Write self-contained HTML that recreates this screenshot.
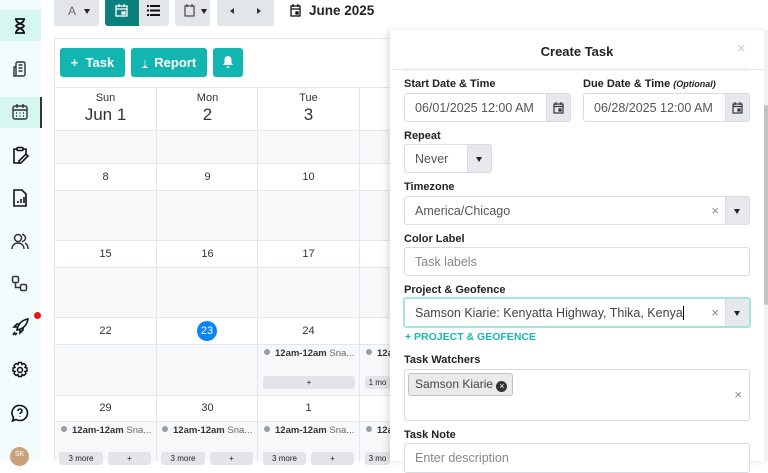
<!DOCTYPE html>
<html><head><meta charset="utf-8"><style>
*{box-sizing:border-box;margin:0;padding:0}
body{width:768px;height:461px;overflow:hidden;background:#fff;font-family:"Liberation Sans",sans-serif;position:relative;color:#222}
.abs{position:absolute}
.sb{left:0;top:0;width:41px;height:461px;background:#f3fcfc}
.ic{position:absolute;left:11px;width:18px;height:18px}
.act{position:absolute;left:0;width:41px;background:#d6f6f0}
.tb{position:absolute;top:0;height:26px;background:#e3e6e9;border-radius:0 0 3px 3px}
.btn{position:absolute;top:48px;height:29px;background:#13b5b1;border-radius:3px;color:#fff;font-weight:bold;font-size:13px;line-height:29px;text-align:center}
.cal{left:54px;top:38px;width:340px;height:423px;border-top:1px solid #e5e7ea;border-left:1px solid #e5e7ea}
.vl{position:absolute;top:88px;width:1px;height:373px;background:#e4e6e9}
.hl{position:absolute;left:54px;width:340px;height:1px;background:#e4e6e9}
.gray{position:absolute;left:55px;width:335px;background:#f7f8fa}
.dn{position:absolute;font-size:11px;color:#333;text-align:center;width:101px}
.ev{position:absolute;font-size:9.5px;color:#333;white-space:nowrap}
.ev b{font-weight:bold}
.ev i{display:inline-block;width:6px;height:6px;border-radius:50%;background:#9a9ea4;margin-right:5px;vertical-align:1px}
.pl{position:absolute;height:13px;background:#e2e4e7;border-radius:3px;font-size:8px;text-align:center;line-height:13px;color:#222;overflow:hidden}
.panel{left:390px;top:30px;width:378px;height:431px;background:#fff;box-shadow:-3px 0 6px rgba(0,0,0,.12)}
.lb{position:absolute;left:404px;font-size:11px;font-weight:bold;color:#222}
.inp{position:absolute;border:1px solid #d8dbdf;border-radius:3px;background:#fff;font-size:12.5px;color:#555;padding-left:10px;display:flex;align-items:center}
.addon{position:absolute;top:0;right:0;bottom:0;background:#e6e8eb;width:24px;border-left:1px solid #d8dbdf}
.tri{position:absolute;width:0;height:0;border-left:3.5px solid transparent;border-right:3.5px solid transparent;border-top:5px solid #222}
.x{position:absolute;color:#888;font-size:13px}
</style></head><body>
<div class="abs sb"></div>
<div class="act" style="top:10px;height:31px"></div>
<div class="act" style="top:97px;height:31px"></div>
<div class="abs" style="left:40px;top:97px;width:2px;height:31px;background:#333"></div>
<svg class="ic" style="top:17px" viewBox="0 0 18 18" fill="none" stroke="#111" stroke-width="1.8"><path d="M4 2h10M4 16h10M5 2c0 5 8 5 8 7s-8 2-8 7M13 2c0 5-8 5-8 7s8 2 8 7"/></svg>
<svg class="ic" style="top:60px" viewBox="0 0 18 18" fill="none" stroke="#333" stroke-width="1.4"><rect x="5" y="2" width="9" height="14" rx="1.5"/><path d="M5 7H3v9h2M7.5 5h4M7.5 8h4M7.5 11h4"/></svg>
<svg class="ic" style="top:103px" viewBox="0 0 18 18" fill="none" stroke="#333" stroke-width="1.4"><rect x="2" y="3" width="14" height="13" rx="2"/><path d="M2 7h14M6 1v4M12 1v4M5 10h1M8.5 10h1M12 10h1M5 13h1M8.5 13h1M12 13h1"/></svg>
<svg class="ic" style="top:146px" viewBox="0 0 18 18" fill="none" stroke="#111" stroke-width="1.6"><path d="M6 3H3v14h6M12 3h3v6"/><rect x="6" y="1.5" width="6" height="3" rx="1"/><path d="M8 15l7-7 2 2-7 7H8z"/></svg>
<svg class="ic" style="top:189px" viewBox="0 0 18 18" fill="none" stroke="#111" stroke-width="1.6"><path d="M3 1h8l4 4v12H3z"/><path d="M7 14v-2M10 14v-4M13 14v-6" /></svg>
<svg class="ic" style="top:232px" viewBox="0 0 18 18" fill="none" stroke="#333" stroke-width="1.5"><circle cx="7" cy="6" r="3.5"/><path d="M1 17c0-4 3-6 6-6s6 2 6 6M11 2.5a3.5 3.5 0 010 7M14 11c2 1 3 3 3 6"/></svg>
<svg class="ic" style="top:275px" viewBox="0 0 18 18" fill="none" stroke="#333" stroke-width="1.5"><rect x="1.5" y="1.5" width="6" height="6" rx="1.5"/><rect x="9.5" y="9.5" width="6" height="6" rx="1.5"/><path d="M4.5 7.5v5h5"/></svg>
<svg class="ic" style="top:318px" viewBox="0 0 18 18" fill="none" stroke="#111" stroke-width="1.6"><path d="M6 12C7 6 11 2 17 1c-1 6-5 10-11 11zM6 9L3 9l3-3h3M9 12v3l3-3v-3M4 14l-2 3M6 15l-2 2"/></svg>
<div class="abs" style="left:34px;top:312px;width:7px;height:7px;border-radius:50%;background:#e8121b"></div>
<svg class="ic" style="top:361px" viewBox="0 0 18 18" fill="none" stroke="#111" stroke-width="1.5"><circle cx="9" cy="9" r="2.5"/><path d="M7.5 1.5h3l.5 2 2-1 2 2-1 2 2 .5v3l-2 .5 1 2-2 2-2-1-.5 2h-3l-.5-2-2 1-2-2 1-2-2-.5v-3l2-.5-1-2 2-2 2 1z"/></svg>
<svg class="ic" style="top:404px" viewBox="0 0 18 18" fill="none" stroke="#111" stroke-width="1.6"><path d="M9 1.5a7.5 7.5 0 110 15c-1.5 0-3-.4-4-1L1.5 17l1-3.5A7.5 7.5 0 019 1.5z"/><path d="M7 7a2 2 0 114 0c0 1.5-2 1.5-2 3M9 12.5v.5"/></svg>
<div class="abs" style="left:10px;top:447px;width:19px;height:19px;border-radius:50%;background:#c9a27c;color:#fff;font-size:7px;text-align:center;line-height:16px">SK</div>

<!-- toolbar -->
<div class="tb" style="left:54px;width:45px"></div>
<div class="abs" style="left:68px;top:4px;font-size:12px;color:#666">A</div><div class="tri" style="left:84px;top:9px"></div>
<div class="tb" style="left:105px;width:34px;background:#0b7f7b;border-radius:0 0 0 3px"></div>
<svg class="abs" style="left:115px;top:4px" width="13" height="13" viewBox="0 0 13 13" fill="none" stroke="#fff" stroke-width="1.3"><rect x="1" y="2" width="11" height="10"/><path d="M1 5h11M4 0v3M9 0v3"/><rect x="7" y="8" width="3" height="2" fill="#fff"/></svg>
<div class="tb" style="left:139px;width:30px;border-radius:0 0 3px 0"></div>
<svg class="abs" style="left:147px;top:5px" width="13" height="11" viewBox="0 0 13 11" fill="#111"><rect x="0" y="0" width="2" height="2"/><rect x="3" y="0" width="10" height="2"/><rect x="0" y="4.5" width="2" height="2"/><rect x="3" y="4.5" width="10" height="2"/><rect x="0" y="9" width="2" height="2"/><rect x="3" y="9" width="10" height="2"/></svg>
<div class="tb" style="left:175px;width:35px"></div>
<svg class="abs" style="left:184px;top:4px" width="11" height="13" viewBox="0 0 11 13" fill="none" stroke="#444" stroke-width="1.2"><rect x="1" y="2" width="9" height="10"/><path d="M3 0v3M8 0v3"/></svg><div class="tri" style="left:201px;top:9px"></div>
<div class="tb" style="left:217px;width:57px"></div>
<div class="abs" style="left:230px;top:8px;border-top:3px solid transparent;border-bottom:3px solid transparent;border-right:4px solid #333"></div>
<div class="abs" style="left:257px;top:8px;border-top:3px solid transparent;border-bottom:3px solid transparent;border-left:4px solid #333"></div>
<svg class="abs" style="left:290px;top:4px" width="11" height="13" viewBox="0 0 11 13" fill="none" stroke="#111" stroke-width="1.3"><rect x="1" y="2" width="9" height="10"/><path d="M1 5h9M3 0v3M8 0v3"/><rect x="6" y="8" width="2" height="2" fill="#111"/></svg>
<div class="abs" style="left:309px;top:3px;font-size:13.5px;font-weight:bold">June 2025</div>

<div class="abs cal"></div>
<div class="btn" style="left:60px;width:65px">+&nbsp; Task</div>
<div class="btn" style="left:131px;width:76px"><span style="display:inline-block;border-bottom:1.5px solid #fff;line-height:8px;margin-right:6px">&#x2193;</span>Report</div>
<div class="btn" style="left:213px;width:30px"><svg width="10" height="12" viewBox="0 0 10 12" style="vertical-align:-1px"><path d="M5 0c2.5 0 3.5 2 3.5 4v3l1.5 2H0l1.5-2V4C1.5 2 2.5 0 5 0zM3.5 10.5h3a1.5 1.5 0 01-3 0z" fill="#fff"/></svg></div>

<div class="hl" style="top:87px"></div>
<div class="gray" style="top:131px;height:32px"></div>
<div class="gray" style="top:191px;height:49px"></div>
<div class="gray" style="top:268px;height:49px"></div>
<div class="gray" style="top:345px;height:50px"></div>
<div class="gray" style="top:422px;height:39px"></div>
<div class="hl" style="top:130px"></div><div class="hl" style="top:163px"></div><div class="hl" style="top:190px"></div>
<div class="hl" style="top:240px"></div><div class="hl" style="top:267px"></div><div class="hl" style="top:317px"></div>
<div class="hl" style="top:344px"></div><div class="hl" style="top:395px"></div><div class="hl" style="top:421px"></div>
<div class="vl" style="left:156px"></div><div class="vl" style="left:257px"></div><div class="vl" style="left:359px"></div>

<div class="dn" style="left:55px;top:92px">Sun<div style="font-size:17px;margin-top:1px">Jun 1</div></div>
<div class="dn" style="left:157px;top:92px">Mon<div style="font-size:17px;margin-top:1px">2</div></div>
<div class="dn" style="left:258px;top:92px">Tue<div style="font-size:17px;margin-top:1px">3</div></div>
<div class="dn" style="left:55px;top:171px">8</div><div class="dn" style="left:157px;top:171px">9</div><div class="dn" style="left:258px;top:171px">10</div>
<div class="dn" style="left:55px;top:248px">15</div><div class="dn" style="left:157px;top:248px">16</div><div class="dn" style="left:258px;top:248px">17</div>
<div class="dn" style="left:55px;top:325px">22</div><div class="dn" style="left:258px;top:325px">24</div>
<div class="abs" style="left:197px;top:321px;width:20px;height:20px;border-radius:50%;background:#0b84f5;color:#fff;font-size:11px;text-align:center;line-height:20px">23</div>
<div class="dn" style="left:55px;top:402px">29</div><div class="dn" style="left:157px;top:402px">30</div><div class="dn" style="left:258px;top:402px">1</div>

<div class="ev" style="left:264px;top:348px"><i></i><b>12am-12am</b> <span style="color:#666">Sna...</span></div>
<div class="ev" style="left:366px;top:348px"><i></i><b>12a</b></div>
<div class="pl" style="left:263px;top:376px;width:92px">+</div>
<div class="pl" style="left:365px;top:376px;width:25px;border-radius:3px 0 0 3px">1 mo</div>
<div class="ev" style="left:61px;top:425px"><i></i><b>12am-12am</b> <span style="color:#666">Sna...</span></div>
<div class="ev" style="left:162px;top:425px"><i></i><b>12am-12am</b> <span style="color:#666">Sna...</span></div>
<div class="ev" style="left:264px;top:425px"><i></i><b>12am-12am</b> <span style="color:#666">Sna...</span></div>
<div class="ev" style="left:366px;top:425px"><i></i><b>12a</b></div>
<div class="pl" style="left:59px;top:452px;width:44px">3 more</div><div class="pl" style="left:108px;top:452px;width:43px">+</div>
<div class="pl" style="left:161px;top:452px;width:44px">3 more</div><div class="pl" style="left:210px;top:452px;width:43px">+</div>
<div class="pl" style="left:263px;top:452px;width:43px">3 more</div><div class="pl" style="left:311px;top:452px;width:43px">+</div>
<div class="pl" style="left:365px;top:452px;width:25px">3 mo</div>

<!-- panel -->
<div class="abs panel"></div>
<div class="abs" style="left:390px;top:44px;width:374px;text-align:center;font-size:13px;font-weight:bold">Create Task</div>
<div class="abs" style="left:737px;top:40px;font-size:15px;color:#ccc">×</div>
<div class="abs" style="left:392px;top:69px;width:372px;height:1px;background:#e6e8eb"></div>
<div class="abs" style="left:403px;top:68px;width:347px;height:3px;background:#eef0f2"></div>
<div class="abs" style="left:764px;top:30px;width:4px;height:431px;background:#f1f1f1"></div>
<div class="abs" style="left:764px;top:105px;width:4px;height:200px;background:#c1c1c1;border-radius:2px"></div>

<div class="lb" style="top:78px">Start Date &amp; Time</div>
<div class="lb" style="left:583px;top:78px">Due Date &amp; Time <i style="font-size:9px">(Optional)</i></div>
<div class="inp" style="left:404px;top:93px;width:167px;height:29px">06/01/2025 12:00 AM<div class="addon"><svg style="position:absolute;left:6px;top:8px" width="11" height="12" viewBox="0 0 11 12" fill="none" stroke="#333" stroke-width="1.2"><rect x="1" y="2" width="9" height="9"/><path d="M1 4.5h9M3 0v3M8 0v3"/><rect x="6" y="7" width="2" height="2" fill="#333"/></svg></div></div>
<div class="inp" style="left:583px;top:93px;width:167px;height:29px">06/28/2025 12:00 AM<div class="addon"><svg style="position:absolute;left:6px;top:8px" width="11" height="12" viewBox="0 0 11 12" fill="none" stroke="#333" stroke-width="1.2"><rect x="1" y="2" width="9" height="9"/><path d="M1 4.5h9M3 0v3M8 0v3"/><rect x="6" y="7" width="2" height="2" fill="#333"/></svg></div></div>

<div class="lb" style="top:130px">Repeat</div>
<div class="inp" style="left:404px;top:144px;width:88px;height:29px">Never<div class="addon"><div class="tri" style="left:8px;top:12px"></div></div></div>

<div class="lb" style="top:181px">Timezone</div>
<div class="inp" style="left:404px;top:196px;width:346px;height:29px">America/Chicago<span class="x" style="right:30px;top:6px">×</span><div class="addon"><div class="tri" style="left:8px;top:12px"></div></div></div>

<div class="lb" style="top:233px">Color Label</div>
<div class="inp" style="left:404px;top:247px;width:346px;height:29px;color:#888">Task labels</div>

<div class="lb" style="top:284px">Project &amp; Geofence</div>
<div class="inp" style="left:403px;top:297px;width:348px;height:31px;border:2px solid #a6e4e0;color:#444">Samson Kiarie: Kenyatta Highway, Thika, Kenya<span style="display:inline-block;width:1px;height:14px;background:#000"></span><span class="x" style="right:30px;top:6px">×</span><div class="addon"><div class="tri" style="left:8px;top:12px"></div></div></div>
<div class="abs" style="left:405px;top:331px;font-size:10.5px;font-weight:bold;color:#1bb7b0">+ PROJECT &amp; GEOFENCE</div>

<div class="lb" style="top:354px">Task Watchers</div>
<div class="inp" style="left:404px;top:369px;width:346px;height:52px;align-items:flex-start;padding:3px"><span style="background:#e8eaec;border:1px solid #bfc3c7;border-radius:3px;padding:3px 5px 3px 6px;font-size:12px;color:#444">Samson Kiarie <span style="display:inline-block;width:11px;height:11px;border-radius:50%;background:#333;color:#fff;font-size:9px;line-height:11px;text-align:center;vertical-align:-1px">×</span></span><span class="x" style="right:7px;top:17px">×</span></div>

<div class="lb" style="top:429px">Task Note</div>
<div class="inp" style="left:404px;top:443px;width:346px;height:30px;color:#888;align-items:flex-start;padding-top:7px">Enter description</div>
</body></html>
